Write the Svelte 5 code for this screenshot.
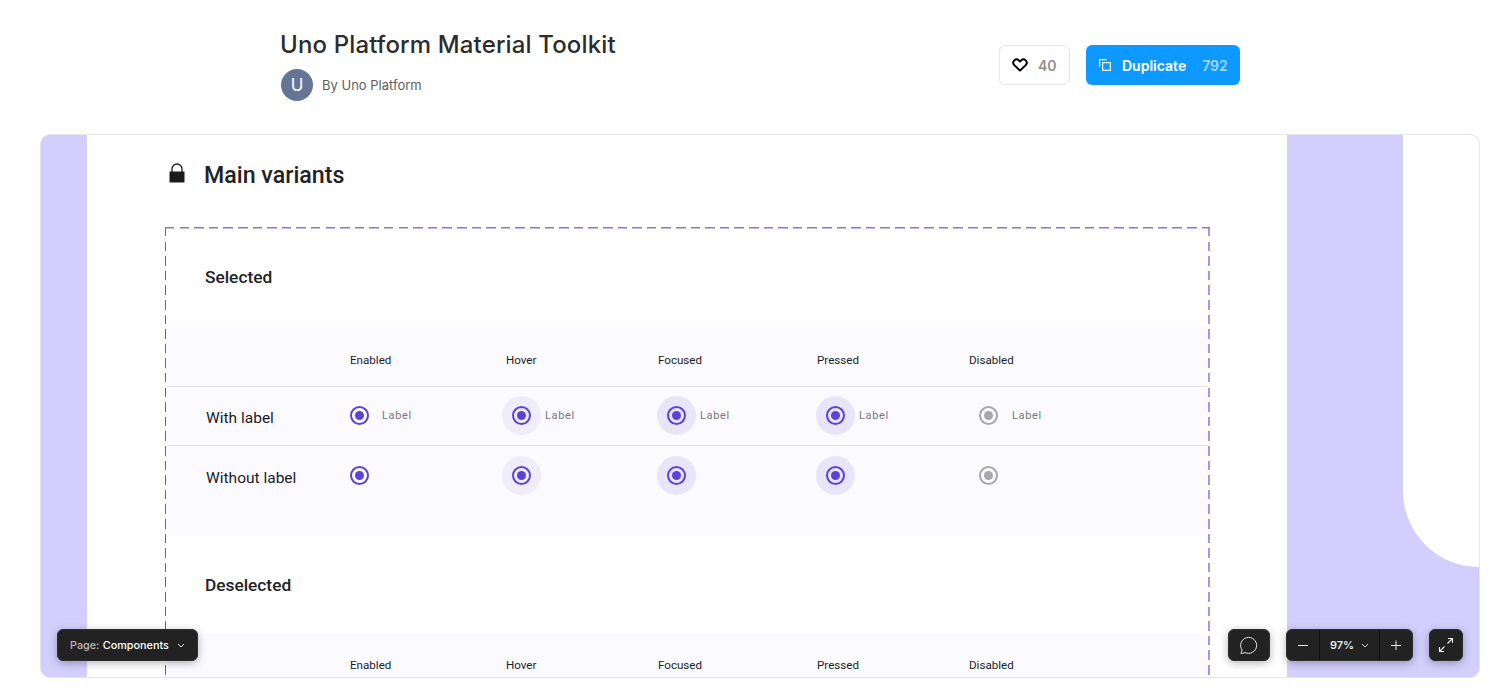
<script lang="ts">
  const states = [
    { name: 'Enabled', cls: 'enabled' },
    { name: 'Hover', cls: 'hover' },
    { name: 'Focused', cls: 'focused' },
    { name: 'Pressed', cls: 'pressed' },
    { name: 'Disabled', cls: 'disabled' }
  ];
</script>

<div class="page">
  <header class="head">
    <div class="info">
      <h1>Uno Platform Material Toolkit</h1>
      <div class="author">
        <span class="avatar">U</span>
        <span>By Uno Platform</span>
      </div>
    </div>
    <div class="actions">
      <button class="like">
        <svg width="16" height="16" viewBox="0 0 16 16" fill="none">
          <path d="M8 13.600 2.300 8.100a3.400 3.400 0 0 1 0-4.700 3.200 3.200 0 0 1 4.500 0L8 4.600l1.200-1.200a3.200 3.200 0 0 1 4.500 0 3.400 3.400 0 0 1 0 4.700L8 13.600Z" stroke="#000" stroke-width="2" stroke-linejoin="round"/>
        </svg>
        <span>40</span>
      </button>
      <button class="dup">
        <svg width="12" height="12" viewBox="0 0 12 12" fill="none" stroke="#fff" stroke-width="1.200">
          <path d="M.6 8V.6H8"/>
          <rect x="3.600" y="3.600" width="7.800" height="7.800"/>
        </svg>
        <span class="dup-text">Duplicate</span>
        <span class="dup-count">792</span>
      </button>
    </div>
  </header>

  <div class="viewer">
    <div class="side"></div>
    <main class="frame">
      <div class="frame-title">
        <svg width="18" height="20" viewBox="0 0 18 20">
          <path d="M4 9V6a5 5 0 0 1 10 0v3" fill="none" stroke="#1c1b1f" stroke-width="1.300"/>
          <rect x="1.500" y="8.500" width="15" height="11" fill="#1c1b1f"/>
        </svg>
        <h2>Main variants</h2>
      </div>

      <div class="dashed">
        <h3>Selected</h3>
        <div class="band">
          <div class="row top">
            <span></span>
            {#each states as s}
              <span class="col-name">{s.name}</span>
            {/each}
          </div>
          <div class="row line">
            <span class="row-name">With label</span>
            {#each states as s}
              <div class="cell {s.cls}">
                <span class="halo"><span class="radio"><span class="dot"></span></span></span>
                <span class="lbl">Label</span>
              </div>
            {/each}
          </div>
          <div class="row line">
            <span class="row-name">Without label</span>
            {#each states as s}
              <div class="cell {s.cls}">
                <span class="halo"><span class="radio"><span class="dot"></span></span></span>
              </div>
            {/each}
          </div>
        </div>

        <h3 class="second">Deselected</h3>
        <div class="band lower">
          <div class="row top">
            <span></span>
            {#each states as s}
              <span class="col-name">{s.name}</span>
            {/each}
          </div>
        </div>
      </div>
    </main>
    <div class="side-right"></div>
    <div class="corner"></div>

    <div class="bar">
      <button class="tool page-btn">
        <span class="muted">Page:</span><span class="page-name">Components</span>
        <svg class="chev" width="8" height="5" viewBox="0 0 8 5" fill="none" stroke="#ddd" stroke-width="1"><path d="m1 1 3 3 3-3"/></svg>
      </button>
      <div class="bar-right">
        <button class="tool icon-btn comment" aria-label="Comment">
          <svg width="20" height="20" viewBox="0 0 20 20" fill="none" stroke="#e6e6e6" stroke-width="1">
            <path d="M1.800 18.300c.4-.6 1.200-2.300 1.300-3.300A8 8 0 1 1 6 17.500c-1.300.8-2.800.9-4.200.8Z" stroke-linejoin="round"/>
          </svg>
        </button>
        <div class="tool zoom-group">
          <span class="zoom-btn">
            <svg width="10" height="10" viewBox="0 0 10 10" stroke="#e6e6e6" stroke-width="1"><path d="M0 5.500h10"/></svg>
          </span>
          <span class="zoom-val">97%
            <svg class="chev" width="8" height="5" viewBox="0 0 8 5" fill="none" stroke="#ccc" stroke-width="1"><path d="m1 1 3 3 3-3"/></svg>
          </span>
          <span class="zoom-btn">
            <svg width="10" height="10" viewBox="0 0 10 10" stroke="#e6e6e6" stroke-width="1"><path d="M0 5.500h10M5 .5v10"/></svg>
          </span>
        </div>
        <button class="tool icon-btn expand" aria-label="Expand">
          <svg width="16" height="16" viewBox="0 0 16 16" fill="none" stroke="#f0f0f0" stroke-width="1.100">
            <path d="M10 1.500h4.500V6M14.500 1.500 9.500 6.500M6 14.500H1.500V10M1.500 14.500l5-5"/>
          </svg>
        </button>
      </div>
    </div>
  </div>
</div>

<style>
  :global(body) {
    margin: 0;
    background: #fff;
  }

  .page {
    height: 691px;
    overflow: hidden;
    font-family: Inter, sans-serif;
  }

  .head {
    height: 134px;
    box-sizing: border-box;
    margin-left: 281px;
    width: 959px;
    display: flex;
    justify-content: space-between;
    align-items: flex-start;
  }

  h1 {
    margin: 29px 0 0 -1px;
    font-size: 24px;
    line-height: 32px;
    font-weight: 500;
    letter-spacing: 0.14px;
    color: #2c2c2c;
  }

  .author {
    display: flex;
    align-items: center;
    gap: 9px;
    margin-top: 8px;
    font-size: 13px;
    color: #5e5e5e;
  }

  .avatar {
    width: 32px;
    height: 32px;
    border-radius: 50%;
    background: #667596;
    color: #fff;
    font-size: 17px;
    display: flex;
    align-items: center;
    justify-content: center;
  }

  .actions {
    display: flex;
    gap: 16px;
    margin-top: 45px;
  }

  button {
    font-family: Inter, sans-serif;
    border: none;
    padding: 0;
    margin: 0;
  }

  .like {
    width: 71px;
    height: 40px;
    box-sizing: border-box;
    border: 1px solid #e6e6e6;
    border-radius: 6px;
    background: #fff;
    display: flex;
    align-items: center;
    gap: 10px;
    padding-left: 12px;
    font-size: 14px;
    font-weight: 600;
    color: #968d89;
  }

  .dup {
    width: 154px;
    height: 40px;
    border-radius: 6px;
    background: #0d99ff;
    display: flex;
    align-items: center;
    padding-left: 13px;
    font-size: 14px;
    font-weight: 600;
    color: #fff;
  }

  .dup-text {
    margin-left: 11px;
  }

  .dup-count {
    margin-left: 16px;
    color: #a8d8fd;
  }

  .viewer {
    position: relative;
    width: 1440px;
    height: 544px;
    margin-left: 40px;
    box-sizing: border-box;
    border: 1px solid #e6e6e6;
    border-radius: 10px;
    overflow: hidden;
    background: #d4cefd;
    display: grid;
    grid-template-columns: 46px 1200px 116px 76px;
  }

  .frame {
    background: #fff;
    overflow: hidden;
    height: 542px;
    padding-left: 78px;
    box-sizing: border-box;
  }

  .frame-title {
    height: 92px;
    display: flex;
    align-items: flex-start;
    gap: 18px;
    padding-top: 28px;
    box-sizing: border-box;
    padding-left: 3px;
  }

  h2 {
    margin: 0;
    font-family: Roboto, sans-serif;
    font-size: 23.200px;
    line-height: 24px;
    font-weight: 500;
    color: #232226;
  }

  .dashed {
    width: 1045px;
    height: 470px;
    box-sizing: border-box;
    padding: 1px 2px 0;
    background-image:
      repeating-linear-gradient(90deg, #8a72e0 0 9.500px, transparent 9.500px 14.600px),
      repeating-linear-gradient(180deg, #6b50d8 0 9.500px, transparent 9.500px 14.600px),
      repeating-linear-gradient(180deg, #a594ea 0 9.500px, transparent 9.500px 14.600px);
    background-size: 100% 1.500px, 1px 100%, 2px 100%;
    background-position: 0 0, 0 0, 100% 0;
    background-repeat: no-repeat;
  }

  h3 {
    margin: 0;
    height: 99px;
    padding: 38px 0 0 38px;
    box-sizing: border-box;
    font-family: Roboto, sans-serif;
    font-size: 17.300px;
    line-height: 22px;
    font-weight: 500;
    color: #232226;
  }

  h3.second {
    height: 98px;
    padding-top: 38px;
  }

  .band {
    background: #fbfaff;
    padding-bottom: 31px;
  }

  .row {
    display: grid;
    grid-template-columns: 183px 156px 152px 159px 152px 1fr;
    align-items: center;
    height: 59px;
  }

  .row.line {
    border-top: 1px solid #e4e3e8;
    box-sizing: border-box;
  }

  .row.line + .row.line {
    height: 60px;
  }

  .row.line + .row.line .row-name {
    padding-top: 5px;
  }

  .col-name {
    font-family: Roboto, sans-serif;
    font-size: 11.600px;
    color: #1c1b1f;
    position: relative;
    top: 3px;
  }

  .lower .col-name {
    top: 1px;
  }

  .row-name {
    font-family: Roboto, sans-serif;
    font-size: 15.500px;
    color: #1c1b1f;
    padding-left: 39px;
    padding-top: 3px;
  }

  .cell {
    display: flex;
    align-items: center;
    height: 39px;
    margin-top: -1px;
  }

  .halo {
    width: 39px;
    height: 39px;
    border-radius: 50%;
    display: flex;
    align-items: center;
    justify-content: center;
    flex: none;
  }

  .radio {
    width: 19px;
    height: 19px;
    box-sizing: border-box;
    border: 2px solid #5b43d6;
    border-radius: 50%;
    display: flex;
    align-items: center;
    justify-content: center;
  }

  .dot {
    width: 9px;
    height: 9px;
    border-radius: 50%;
    background: #5b43d6;
  }

  .lbl {
    font-family: Roboto, sans-serif;
    font-size: 11px;
    letter-spacing: 0.65px;
    color: #79747e;
    margin-left: 4px;
  }

  .enabled {
    margin-left: -10px;
  }

  .enabled .lbl {
    margin-left: 3px;
  }

  .hover {
    margin-left: -4px;
  }

  .hover .halo {
    background: #efedfa;
  }

  .focused,
  .pressed {
    margin-left: -1px;
  }

  .focused .halo,
  .pressed .halo {
    background: #e8e5f9;
  }

  .disabled .radio {
    border-color: #a9a7ab;
  }

  .disabled .dot {
    background: #a9a7ab;
  }

  .corner {
    height: 432px;
    background: #fff;
    border-bottom-left-radius: 76px;
  }

  .bar {
    position: absolute;
    left: 16px;
    right: 16px;
    bottom: 16px;
    display: flex;
    justify-content: space-between;
    align-items: flex-end;
  }

  .bar-right {
    display: flex;
    gap: 16px;
  }

  .tool {
    height: 32px;
    background: #222;
    border: 1px solid #2e2e2e;
    box-sizing: border-box;
    border-radius: 6px;
    box-shadow: 0 2px 8px rgba(0, 0, 0, 0.3);
    color: #fff;
  }

  .page-btn {
    width: 141px;
    display: flex;
    align-items: center;
    padding-left: 12px;
    font-size: 10.800px;
    font-weight: 500;
  }

  .page-name {
    margin-left: 3.500px;
  }

  .muted {
    color: #bbb;
  }

  .chev {
    margin-left: 8px;
  }

  .icon-btn {
    display: flex;
    align-items: center;
    justify-content: center;
  }

  .comment {
    width: 42px;
  }

  .expand {
    width: 34px;
  }

  .zoom-group {
    width: 127px;
    display: grid;
    grid-template-columns: 32px 61px 1fr;
    font-size: 11px;
    font-weight: 600;
    color: #e6e6e6;
    overflow: hidden;
  }

  .zoom-btn {
    display: flex;
    align-items: center;
    justify-content: center;
  }

  .zoom-val {
    display: flex;
    align-items: center;
    justify-content: center;
    border-left: 1px solid #111;
    border-right: 1px solid #111;
  }

  .zoom-val .chev {
    margin-left: 7px;
  }
</style>
